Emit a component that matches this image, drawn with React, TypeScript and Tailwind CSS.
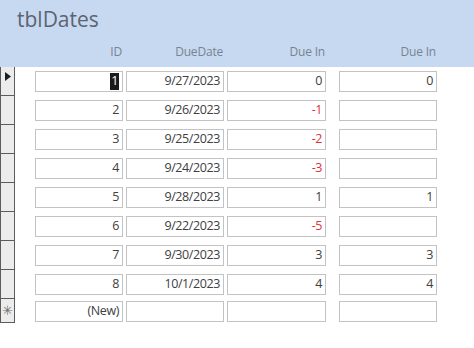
const rows = [
  { id: "1", date: "9/27/2023", dueIn: 0, dueIn2: "0" },
  { id: "2", date: "9/26/2023", dueIn: -1, dueIn2: "" },
  { id: "3", date: "9/25/2023", dueIn: -2, dueIn2: "" },
  { id: "4", date: "9/24/2023", dueIn: -3, dueIn2: "" },
  { id: "5", date: "9/28/2023", dueIn: 1, dueIn2: "1" },
  { id: "6", date: "9/22/2023", dueIn: -5, dueIn2: "" },
  { id: "7", date: "9/30/2023", dueIn: 3, dueIn2: "3" },
  { id: "8", date: "10/1/2023", dueIn: 4, dueIn2: "4" },
];

const box =
  "h-[21px] border border-[#c3c3c3] bg-white flex items-center justify-end pr-[3px] text-[12.5px] tracking-[-0.4px] leading-none";

function Selector({ children, last }: { children?: React.ReactNode; last?: boolean }) {
  return (
    <div
      className={`w-[15px] shrink-0 border-l border-r border-b border-[#5c5c5c] bg-[#ececec] flex justify-center ${
        last ? "h-[24px] items-center" : "h-[29px] items-start pt-[5px]"
      }`}
    >
      {children}
    </div>
  );
}

export default function App() {
  return (
    <div
      className="w-[474px] h-[348px] bg-white overflow-hidden"
      style={{ fontFamily: '"Open Sans", "Liberation Sans", sans-serif' }}
    >
      <div className="h-[67px] bg-[#c7d9f0]">
        <div className="pl-[17px] pt-[3px] text-[21px] text-[#5b6470] leading-[32px]">tblDates</div>
        <div className="flex items-end mt-[11px] text-[12px] tracking-[-0.2px] text-[#78838f] leading-none">
          <div className="w-[15px] shrink-0" />
          <div className="w-[88px] ml-[20px] text-right pr-[1px]">ID</div>
          <div className="w-[98px] ml-[3px] text-right pr-[1px]">DueDate</div>
          <div className="w-[99px] ml-[3px] text-right pr-[1px]">Due In</div>
          <div className="w-[98px] ml-[13px] text-right pr-[1px]">Due In</div>
        </div>
      </div>

      <div className="flex flex-col">
        {rows.map((r, i) => (
          <div key={r.id} className="flex items-start">
            <Selector>
              {i === 0 && (
                <svg width="6" height="9" viewBox="0 0 6 9">
                  <path d="M0 0 L6 4.5 L0 9 Z" fill="#1f1f1f" />
                </svg>
              )}
            </Selector>
            <div className="flex mt-[4px] ml-[20px] text-[#404040]">
              <div className={`${box} w-[88px]`}>
                {i === 0 ? (
                  <span className="bg-[#1a1a1a] text-white px-[1px] py-[2px]">{r.id}</span>
                ) : (
                  r.id
                )}
              </div>
              <div className={`${box} w-[98px] ml-[3px]`}>{r.date}</div>
              <div className={`${box} w-[99px] ml-[3px] ${r.dueIn < 0 ? "text-[#e0303c]" : ""}`}>
                {r.dueIn}
              </div>
              <div className={`${box} w-[98px] ml-[13px]`}>{r.dueIn2}</div>
            </div>
          </div>
        ))}
        <div className="flex items-start">
          <Selector last>
            <span className="text-[13px] leading-none text-[#707070]">✳</span>
          </Selector>
          <div className="flex mt-[2px] ml-[20px] text-[#404040]">
            <div className={`${box} w-[88px]`}>(New)</div>
            <div className={`${box} w-[98px] ml-[3px]`} />
            <div className={`${box} w-[99px] ml-[3px]`} />
            <div className={`${box} w-[98px] ml-[13px]`} />
          </div>
        </div>
      </div>
    </div>
  );
}
